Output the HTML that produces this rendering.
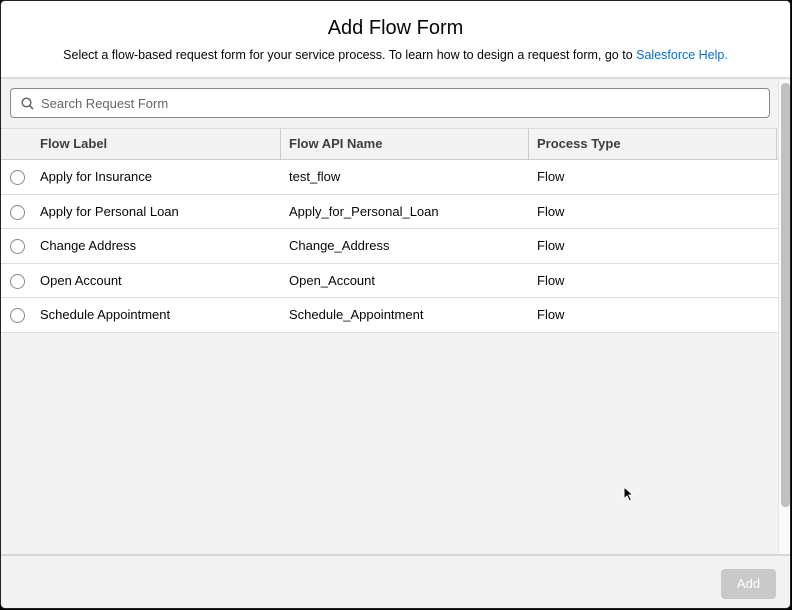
<!DOCTYPE html><html><head><style>
*{box-sizing:border-box;margin:0;padding:0}
body{width:792px;height:610px;background:#000;font-family:"Liberation Sans",sans-serif;overflow:hidden}
.f{position:absolute;left:0;top:0;width:791px;height:609px;background:#f3f3f3;border:1px solid #222;border-radius:5px;overflow:hidden}
.h{position:absolute;left:0;top:0;width:100%;height:78px;background:#fff;border-bottom:2px solid #ddd;text-align:center}
.h h1{font-weight:normal;font-size:20px;color:#080707;margin-top:16px}
.h p{font-size:12.5px;color:#080707;margin-top:8px}
.h a{color:#0070d2}
.s{position:absolute;left:9px;top:87px;width:760px;height:30px;background:#fff;border:1px solid #888;border-radius:4px;font-size:13px;color:#666;padding:7px 0 0 30px}
.s svg{position:absolute;left:10px;top:8px}
.t{position:absolute;left:0;top:127px;width:777px}
.r{height:34.5px;background:#fff;border-bottom:1px solid #ddd;position:relative;font-size:13px;color:#080707}
.r span{position:absolute;top:9px}
.hd{height:32px;background:#f3f3f3;border-top:1px solid #ddd;border-bottom:1px solid #ccc;font-weight:bold;color:#3e3e3c}
.hd span{top:7px}
.hd i{position:absolute;top:0;height:31px;border-left:1px solid #ccc}
.rd{position:absolute;left:9px;top:10px;width:15px;height:15px;border:1px solid #888;border-radius:50%;background:#fff}
.sb{position:absolute;left:777px;top:79px;width:14px;height:474px;background:#fafafa;border-left:1px solid #e5e5e5}
.sb div{position:absolute;left:2px;top:3px;width:9px;height:424px;background:#c1c1c1;border-radius:4px}
.ft{position:absolute;left:0;top:553px;width:100%;height:56px;border-top:2px solid #d6d6d6}
.b{position:absolute;left:720px;top:13px;width:55px;height:30px;background:#c9c9c9;border-radius:4px;color:#fff;font-size:13px;text-align:center;line-height:30px}
</style></head><body><div class="f">
<div class="h"><h1>Add Flow Form</h1><p>Select a flow-based request form for your service process. To learn how to design a request form, go to <a>Salesforce Help.</a></p></div>
<div class="s"><svg width="13" height="13" viewBox="0 0 13 13"><circle cx="5.5" cy="5.5" r="4.3" fill="none" stroke="#666" stroke-width="1.5"/><path d="M8.6 8.6L12 12" stroke="#666" stroke-width="1.6"/></svg>Search Request Form</div>
<div class="t">
<div class="r hd"><span style="left:39px">Flow Label</span><i style="left:279px"></i><span style="left:288px">Flow API Name</span><i style="left:527px"></i><span style="left:536px">Process Type</span><i style="left:775px"></i></div>
<div class="r"><div class="rd"></div><span style="left:39px">Apply for Insurance</span><span style="left:288px">test_flow</span><span style="left:536px">Flow</span></div>
<div class="r"><div class="rd"></div><span style="left:39px">Apply for Personal Loan</span><span style="left:288px">Apply_for_Personal_Loan</span><span style="left:536px">Flow</span></div>
<div class="r"><div class="rd"></div><span style="left:39px">Change Address</span><span style="left:288px">Change_Address</span><span style="left:536px">Flow</span></div>
<div class="r"><div class="rd"></div><span style="left:39px">Open Account</span><span style="left:288px">Open_Account</span><span style="left:536px">Flow</span></div>
<div class="r"><div class="rd"></div><span style="left:39px">Schedule Appointment</span><span style="left:288px">Schedule_Appointment</span><span style="left:536px">Flow</span></div>
</div>
<div class="sb"><div></div></div>
<svg style="position:absolute;left:622px;top:485px" width="12" height="16" viewBox="0 0 12 16"><path d="M1 1L1 13L4 10L6.5 15L8.5 14L6 9L10 9Z" fill="#000" stroke="#fff" stroke-width="1"/></svg>
<div class="ft"><div class="b">Add</div></div>
</div></body></html>
